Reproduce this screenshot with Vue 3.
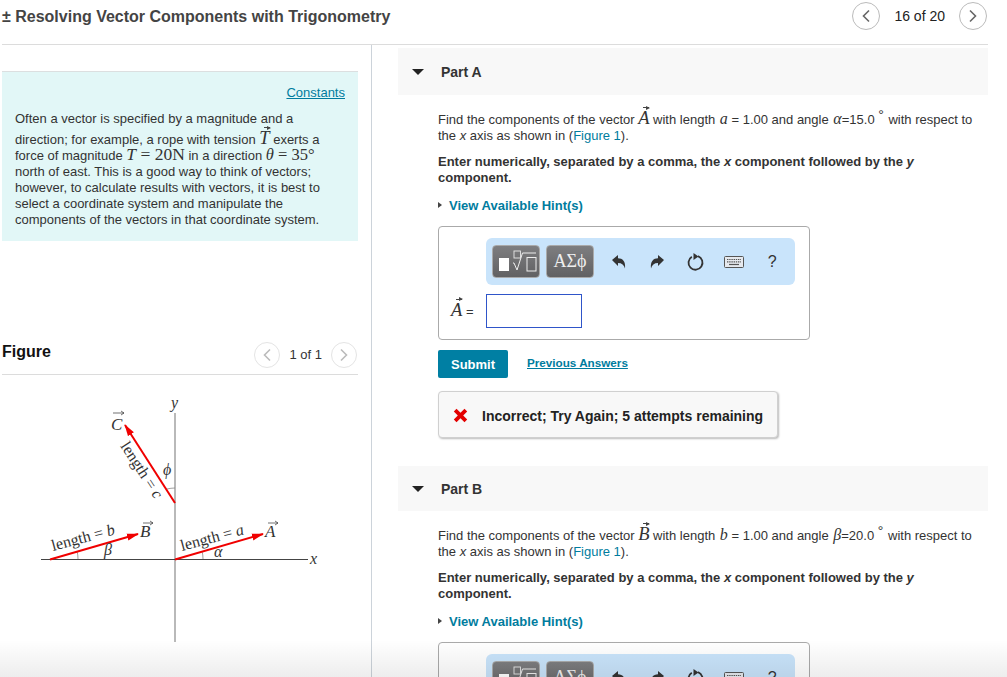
<template>
  <div class="page">
    <header class="topbar">
      <h1 class="title">± Resolving Vector Components with Trigonometry</h1>
      <div class="pager">
        <button class="round-btn"><svg width="10" height="14" viewBox="0 0 10 14"><path d="M8 1.5 2.500 7 8 12.500" /></svg></button>
        <span class="pager-text">16 of 20</span>
        <button class="round-btn"><svg width="10" height="14" viewBox="0 0 10 14"><path d="M2 1.5 7.500 7 2 12.500" /></svg></button>
      </div>
    </header>

    <div class="columns">
      <aside class="left">
        <section class="intro">
          <a class="constants">Constants</a>
          <p>
            Often a vector is specified by a magnitude and a<br />
            <span class="tall">direction; for example, a rope with tension <span class="vec"><i>T</i></span>&nbsp;exerts a</span><br />
            force of magnitude <span class="m"><i>T</i> = 20N</span> in a direction <span class="m theta"><i>θ</i> = 35°</span><br />
            north of east. This is a good way to think of vectors;<br />
            however, to calculate results with vectors, it is best to<br />
            select a coordinate system and manipulate the<br />
            components of the vectors in that coordinate system.
          </p>
        </section>

        <div class="figure-head">
          <h2>Figure</h2>
          <div class="fig-pager">
            <button class="round-btn faint"><svg width="10" height="14" viewBox="0 0 10 14"><path d="M8 1.5 2.500 7 8 12.500" /></svg></button>
            <span>1 of 1</span>
            <button class="round-btn faint"><svg width="10" height="14" viewBox="0 0 10 14"><path d="M2 1.5 7.500 7 2 12.500" /></svg></button>
          </div>
        </div>

        <svg class="diagram" width="358" height="270" viewBox="0 375 358 270">
          <defs>
            <marker id="head" markerWidth="12" markerHeight="8" refX="11" refY="4" orient="auto" markerUnits="userSpaceOnUse">
              <path d="M0 .5 12 4 0 7.500z" fill="#f00000" />
            </marker>
          </defs>
          <line x1="175" y1="413" x2="175" y2="642" stroke="#8a8a8a" stroke-width="1.200" />
          <line x1="41" y1="559.500" x2="308" y2="559.500" stroke="#444" stroke-width="1" />
          <path d="M78 559A30 30 0 0 0 77 551M203 559A30 30 0 0 0 202 551M167 489A35 35 0 0 1 175 488" fill="none" stroke="#888" stroke-width=".8" />
          <line x1="175" y1="559.500" x2="263" y2="534" class="arrow" marker-end="url(#head)" />
          <line x1="50" y1="559.500" x2="138" y2="534" class="arrow" marker-end="url(#head)" />
          <line x1="175" y1="503" x2="125" y2="425" class="arrow" marker-end="url(#head)" />
          <g class="lbl">
            <text x="171" y="408" font-style="italic">y</text>
            <text x="310" y="564" font-style="italic">x</text>
            <text x="111" y="430" font-style="italic" class="cap">C</text>
            <text x="140" y="537" font-style="italic" class="cap">B</text>
            <text x="265" y="537" font-style="italic" class="cap">A</text>
            <text x="214" y="557" font-style="italic">α</text>
            <text x="104" y="555" font-style="italic">β</text>
            <text x="163" y="475" font-style="italic">ϕ</text>
            <text transform="translate(182 551) rotate(-15)">length = <tspan font-style="italic">a</tspan></text>
            <text transform="translate(53 551) rotate(-15)">length = <tspan font-style="italic">b</tspan></text>
            <text transform="translate(120 446) rotate(57)">length = <tspan font-style="italic">c</tspan></text>
          </g>
          <path d="M113 413h11m-3-2 3 2-3 2M143 523h10m-3-2 3 2-3 2M268 523h10m-3-2 3 2-3 2" fill="none" stroke="#333" stroke-width=".7" />
        </svg>
      </aside>

      <main class="right">
        <section v-for="part in parts" :key="part.name" class="part">
          <div class="part-head">
            <span class="caret"></span>
            <span>{{ part.name }}</span>
          </div>
          <div class="part-body">
            <p class="q">
              Find the components of the vector <span class="vec"><i>{{ part.letter }}</i></span> with length <i class="serif">{{ part.len }}</i> = 1.00 and angle <i class="serif">{{ part.angle }}</i>={{ part.value }} <span class="deg">°</span> with respect to<br />
              the <i>x</i> axis as shown in (<a class="fig-link">Figure 1</a>).
            </p>
            <p class="q strong">Enter numerically, separated by a comma, the <i>x</i> component followed by the <i>y</i><br />component.</p>
            <a class="hints"><span class="mini-caret"></span>View Available Hint(s)</a>

            <div class="answer">
              <div class="toolbar">
                <div class="tool-btn">
                  <svg width="46" height="31" viewBox="0 0 46 31">
                    <rect x="6" y="12" width="10" height="13" fill="#fff" />
                    <rect x="21" y="5" width="6.500" height="7" fill="none" stroke="#e8e8e8" stroke-width=".9" />
                    <path d="M20 17h1l3 7 5.500-17H43" fill="none" stroke="#eee" stroke-width="1" />
                    <rect x="34" y="11.500" width="9" height="13.500" fill="none" stroke="#eee" stroke-width="1" />
                  </svg>
                </div>
                <div class="tool-btn greek">ΑΣϕ</div>
                <span class="tool-cell"><svg width="16" height="16" viewBox="0 0 16 16"><path d="M1 6 7 1v3.200c4.500 0 7.800 3 7 10.300C13.200 11 10.800 9 7 9v3z" fill="#333" /></svg></span>
                <span class="tool-cell"><svg width="16" height="16" viewBox="0 0 16 16"><path d="M15 6 9 1v3.200C4.500 4.200 1.200 7.200 2 14.500 2.800 11 5.200 9 9 9v3z" fill="#333" /></svg></span>
                <span class="tool-cell"><svg width="18" height="18" viewBox="0 0 18 18"><path d="M11 3.200A7 7 0 1 1 4.800 3.800" fill="none" stroke="#333" stroke-width="1.800" /><path d="M6.500 0v7l5-3.500z" fill="#333" /></svg></span>
                <span class="tool-cell"><svg width="20" height="12" viewBox="0 0 20 12"><rect x=".5" y=".5" width="19" height="11" rx="1" fill="#e6e9ee" stroke="#555" /><path d="M3 3.500h14M3 5.800h14" stroke="#555" stroke-width="1.200" stroke-dasharray="1.400 .8" /><path d="M5 8.500h10" stroke="#555" stroke-width="1.200" /></svg></span>
                <span class="tool-cell help">?</span>
              </div>
              <div class="answer-row">
                <span class="answer-label"><span class="vec"><i>{{ part.letter }}</i></span> =</span>
                <div class="input"></div>
              </div>
            </div>

            <template v-if="part.feedback">
              <div class="actions">
                <button class="submit">Submit</button>
                <a class="prev">Previous Answers</a>
              </div>
              <div class="feedback">
                <svg width="15" height="15" viewBox="0 0 15 15"><path d="M.8 3.500 3.500.8l4 4 4-4 2.700 2.700-4 4 4 4-2.700 2.700-4-4-4 4L.8 11.500l4-4z" fill="#e30000" /></svg>
                <span>{{ part.feedback }}</span>
              </div>
            </template>
          </div>
        </section>
      </main>
    </div>

    <div class="fade"></div>
  </div>
</template>

<script setup>
const parts = [
  { name: 'Part A', letter: 'A', len: 'a', angle: 'α', value: '15.0', feedback: 'Incorrect; Try Again; 5 attempts remaining' },
  { name: 'Part B', letter: 'B', len: 'b', angle: 'β', value: '20.0', feedback: '' }
]
</script>

<style>
html, body {
  margin: 0;
  background: #fff;
}
</style>

<style scoped>
.page {
  position: relative;
  width: 1007px;
  height: 677px;
  overflow: hidden;
  font-family: "Liberation Sans", Arial, sans-serif;
  font-size: 13px;
  color: #333;
}
.topbar {
  display: flex;
  justify-content: space-between;
  align-items: center;
  height: 32px;
  margin: 0 19px 0 2px;
  padding-bottom: 12px;
  border-bottom: 1px solid #dcdcdc;
}
.title {
  margin: 1px 0 0;
  font-size: 16px;
  font-weight: bold;
  color: #444;
}
.pager, .fig-pager {
  display: flex;
  align-items: center;
}
.pager {
  gap: 14px;
  padding-right: 1px;
  font-size: 14px;
  color: #222;
}
.round-btn {
  display: flex;
  align-items: center;
  justify-content: center;
  width: 28px;
  height: 28px;
  padding: 0;
  border: 1px solid #bbb;
  border-radius: 50%;
  background: #fff;
}
.round-btn path {
  fill: none;
  stroke: #666;
  stroke-width: 1.600;
}
.round-btn.faint {
  width: 26px;
  height: 26px;
  border-color: #e4e4e4;
}
.round-btn.faint path {
  stroke: #bbb;
}
.columns {
  display: flex;
  height: 632px;
}
.left {
  width: 372px;
  flex: none;
  box-sizing: border-box;
  padding: 26px 13px 0 2px;
  border-right: 1px solid #ccd3da;
}
.intro {
  box-sizing: border-box;
  height: 170px;
  padding: 13px 13px 0;
  border-top: 1px solid #dcdfe0;
  background: #e2f7f7;
}
.constants {
  display: block;
  text-align: right;
  color: #007c9e;
  text-decoration: underline;
  line-height: 16px;
}
.intro p {
  margin: 10px 0 0;
  line-height: 16px;
}
.tall {
  display: inline-block;
  padding-top: 5px;
}
.m {
  font-family: "Liberation Serif", serif;
  font-size: 17.500px;
  line-height: 0;
}
.theta {
  font-size: 16.500px;
}
/* inline box, so the arrow sits against the glyph and the line height stays put */
.vec {
  position: relative;
  font-family: "Liberation Serif", serif;
  font-size: 18.500px;
  line-height: 0;
}
.vec::after {
  content: "";
  position: absolute;
  right: 0;
  top: -1px;
  width: 6px;
  height: 1px;
  background: #444;
}
.vec::before {
  content: "";
  position: absolute;
  right: -1px;
  top: -2.500px;
  border-left: 4px solid #444;
  border-top: 2px solid transparent;
  border-bottom: 2px solid transparent;
}
.figure-head {
  display: flex;
  align-items: center;
  justify-content: space-between;
  box-sizing: border-box;
  height: 59px;
  margin-top: 75px;
  padding: 25px 1px 6px 0;
  border-bottom: 1px solid #dcdcdc;
}
.figure-head h2 {
  margin: 0 0 5px;
  font-size: 16px;
  line-height: 18px;
  color: #111;
}
.fig-pager {
  gap: 9px;
  font-size: 13px;
  color: #333;
}
.diagram {
  display: block;
  margin-left: -2px;
}
.arrow {
  stroke: #f00000;
  stroke-width: 2;
}
.lbl text {
  font-family: "Liberation Serif", serif;
  font-size: 16px;
  fill: #333;
}
.lbl .cap {
  font-size: 17px;
}
.right {
  width: 590px;
  flex: none;
  margin-left: 26px;
  padding-top: 3px;
}
.part-head {
  display: flex;
  align-items: center;
  height: 47px;
  padding-left: 14px;
  background: #f8f8f8;
  font-size: 14px;
  font-weight: bold;
  color: #333;
}
.part + .part .part-head {
  height: 45px;
}
.caret {
  width: 0;
  height: 0;
  margin-right: 17px;
  border-left: 6px solid transparent;
  border-right: 6px solid transparent;
  border-top: 6px solid #222;
}
.part-body {
  padding: 17px 0 28px 40px;
}
.q {
  margin: 0 0 10px;
  line-height: 16px;
}
.strong {
  font-weight: bold;
}
.serif {
  margin-left: 1px;
  font-family: "Liberation Serif", serif;
  font-size: 16px;
  line-height: 0;
}
.deg {
  position: relative;
  top: -4px;
  margin-right: 1px;
  font-size: 14px;
  line-height: 0;
}
.fig-link {
  color: #007c9e;
}
.hints {
  display: flex;
  align-items: center;
  height: 18px;
  font-weight: bold;
  color: #007c9e;
}
.mini-caret {
  width: 0;
  height: 0;
  margin-right: 7px;
  border-top: 3.500px solid transparent;
  border-bottom: 3.500px solid transparent;
  border-left: 4px solid #444;
}
.answer {
  box-sizing: border-box;
  width: 372px;
  height: 114px;
  margin-top: 12px;
  padding: 11px 14px 0 47px;
  border: 1px solid #aaa;
  border-radius: 4px;
}
.toolbar {
  display: flex;
  align-items: center;
  height: 47px;
  padding-left: 6px;
  border-radius: 6px;
  background: #c9e4fb;
}
.tool-btn {
  box-sizing: border-box;
  display: flex;
  align-items: center;
  justify-content: center;
  width: 48px;
  height: 33px;
  margin-right: 6px;
  border: 1px solid #aaa;
  border-radius: 4px;
  background: linear-gradient(#7e7e80, #616163);
  color: #eee;
}
.greek {
  font-family: "Liberation Serif", serif;
  font-size: 18px;
}
.tool-cell {
  display: flex;
  align-items: center;
  justify-content: center;
  width: 38.250px;
}
.help {
  font-size: 16px;
  color: #333;
}
.answer-row {
  display: flex;
  align-items: center;
  margin-top: 9px;
  margin-left: -36px;
}
.answer-label {
  width: 36px;
  padding-left: 1px;
  box-sizing: border-box;
  font-size: 13px;
}
.input {
  box-sizing: border-box;
  width: 96px;
  height: 34px;
  border: 1px solid #2f55c9;
}
.actions {
  display: flex;
  align-items: center;
  gap: 19px;
  margin-top: 10px;
}
.submit {
  width: 70px;
  height: 28px;
  padding: 0;
  border: none;
  border-radius: 2px;
  background: #007fa3;
  color: #fff;
  font: bold 13px "Liberation Sans", Arial, sans-serif;
}
.prev {
  margin-bottom: 3px;
  font-size: 11.700px;
  font-weight: bold;
  color: #007c9e;
  text-decoration: underline;
}
.feedback {
  box-sizing: border-box;
  display: flex;
  align-items: center;
  gap: 14px;
  width: 340px;
  height: 47px;
  margin-top: 13px;
  padding: 2px 0 0 14px;
  border: 1px solid #d0d0d0;
  border-radius: 4px;
  background: #f8f8f8;
  box-shadow: 1px 1px 2px #bbb;
  font-size: 14px;
  font-weight: bold;
  color: #222;
}
.fade {
  position: absolute;
  left: 0;
  right: 0;
  bottom: 0;
  height: 37px;
  background: linear-gradient(rgba(0, 0, 0, 0), rgba(0, 0, 0, 0.07));
  pointer-events: none;
}
</style>
